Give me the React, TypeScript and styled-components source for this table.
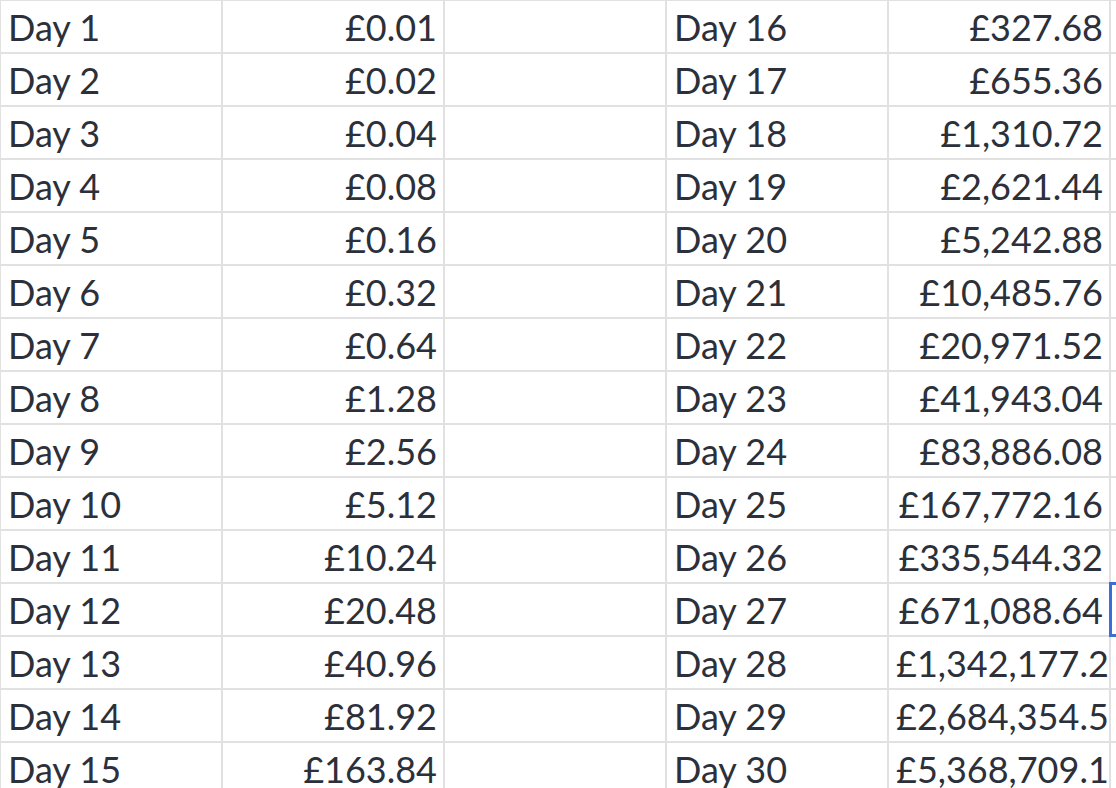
import React from 'react'
import styled, { createGlobalStyle } from 'styled-components'

const GlobalStyle = createGlobalStyle`
  html, body {
    margin: 0;
    padding: 0;
    background: #ffffff;
    overflow: hidden;
  }
  body {
    font-family: Lato, 'Noto Sans', sans-serif;
  }
`

const Sheet = styled.div`
  display: grid;
  grid-template-columns: repeat(6, 220px);
  grid-auto-rows: 51px;
  gap: 2px;
  padding: 2px 0 0 2px;
  margin: -1px 0 0 -1px;
  width: max-content;
  background: #e1e1e1;
`

const Cell = styled.div<{ $align?: 'left' | 'right'; $selected?: boolean }>`
  position: relative;
  background: #ffffff;
  color: #2b303a;
  font-size: 36px;
  line-height: 50px;
  padding: 1px 6px 0 7px;
  box-sizing: border-box;
  white-space: nowrap;
  overflow: hidden;
  text-align: ${(p) => p.$align || 'left'};

  ${(p) =>
    p.$selected &&
    `
    overflow: visible;
    &::after {
      content: '';
      position: absolute;
      left: -2px;
      top: -2px;
      right: -2px;
      bottom: -2px;
      border: 3px solid #3a6fdb;
    }
  `}
`

const money = (pennies: number) => {
  const pounds = Math.floor(pennies / 100)
  const pence = String(pennies % 100).padStart(2, '0')
  const grouped = String(pounds).replace(/\B(?=(\d{3})+(?!\d))/g, ',')
  return `£${grouped}.${pence}`
}

const rows = Array.from({ length: 15 }, (_, i) => ({
  left: { day: i + 1, value: money(2 ** i) },
  right: { day: i + 16, value: money(2 ** (i + 15)) },
}))

const App = () => {
  return (
    <>
      <GlobalStyle />
      <Sheet>
        {rows.map((row, i) => (
          <React.Fragment key={row.left.day}>
            <Cell>Day {row.left.day}</Cell>
            <Cell $align="right">{row.left.value}</Cell>
            <Cell />
            <Cell>Day {row.right.day}</Cell>
            <Cell $align="right">{row.right.value}</Cell>
            <Cell $selected={i === 11} />
          </React.Fragment>
        ))}
      </Sheet>
    </>
  )
}

export default App
